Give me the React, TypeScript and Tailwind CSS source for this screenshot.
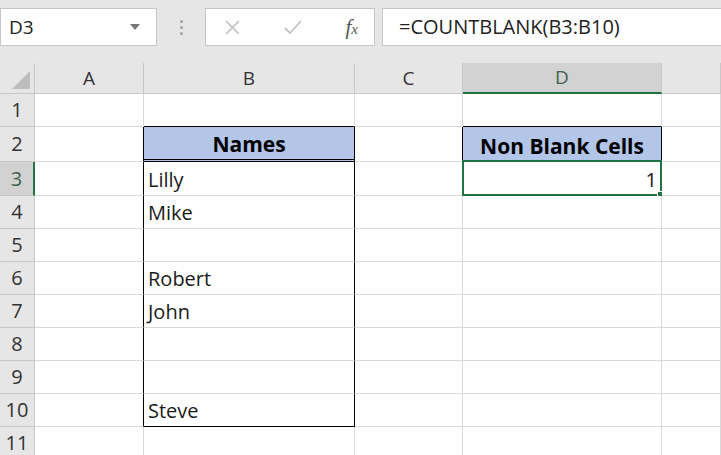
import React from 'react';

const cols = ['A', 'B', 'C', 'D', 'E'];
const rowHeights = [33, 35, 34, 33, 33, 33, 33, 33, 33, 33, 33];
const names: Record<number, string> = { 3: 'Lilly', 4: 'Mike', 6: 'Robert', 7: 'John', 10: 'Steve' };

const cellFont = { fontFamily: '"Open Sans", "Liberation Sans", sans-serif' };

function Cell({ row, col }: { row: number; col: number }) {
  // default grid borders
  let right = 'border-r-[#d9d9d9]';
  let bottom = 'border-b-[#d9d9d9]';
  let bottomW = 'border-b';
  let bg = 'bg-white';
  let content: React.ReactNode = null;

  if (col === 0 && row >= 2 && row <= 10) right = 'border-r-black';
  if (col === 1) {
    if (row === 1) bottom = 'border-b-black';
    if (row >= 2 && row <= 10) right = 'border-r-black';
    if (row === 2) {
      bottom = 'border-b-black';
      bottomW = 'border-b-[3px] border-double';
      bg = 'bg-[#b4c6e7]';
      content = <span className="w-full text-center font-bold text-[21px] leading-[28px] text-black">Names</span>;
    }
    if (row === 10) bottom = 'border-b-black';
    if (names[row]) content = <span className="pl-[4px] text-[20px] leading-[28px] text-[#1a1a1a]">{names[row]}</span>;
  }
  if (col === 2 && row === 2) right = 'border-r-black';
  if (col === 3) {
    if (row === 1) bottom = 'border-b-black';
    if (row === 2) {
      right = 'border-r-black';
      bg = 'bg-[#b4c6e7]';
      content = <span className="w-full text-center font-bold text-[21px] leading-[28px] text-black whitespace-nowrap">Non Blank Cells</span>;
    }
  }

  const selected = col === 3 && row === 3;

  return (
    <div className={`relative flex items-end pb-[1px] border-r ${bottomW} ${right} ${bottom} ${bg}`} style={cellFont}>
      {content}
      {selected && (
        <div className="absolute -left-px -top-[2px] -right-px -bottom-px border-2 border-[#217346] flex items-end justify-end pr-[3px]">
          <span className="text-[20px] leading-[28px] text-[#1a1a1a]">1</span>
          <div className="absolute -right-[4px] -bottom-[4px] w-[7px] h-[7px] bg-[#217346] border border-white" />
        </div>
      )}
    </div>
  );
}

export default function App() {
  return (
    <div className="w-[721px] h-[455px] overflow-hidden bg-white" style={{ fontFamily: '"Open Sans", "Liberation Sans", sans-serif' }}>
      {/* formula bar */}
      <div className="h-[64px] bg-[#e6e6e6] flex items-start pt-[8px]">
        <div className="w-[157px] h-[38px] bg-white border border-[#c6c6c6] flex items-center justify-between pl-[8px] pr-[16px]">
          <span className="text-[19px] text-[#222]">D3</span>
          <svg width="10" height="6" viewBox="0 0 10 6"><path d="M0 0h10L5 6z" fill="#777" /></svg>
        </div>
        <div className="w-[48px] h-[38px] flex flex-col items-center justify-center gap-[3px]">
          <span className="w-[3px] h-[3px] bg-[#a0a0a0] rounded-full" />
          <span className="w-[3px] h-[3px] bg-[#a0a0a0] rounded-full" />
          <span className="w-[3px] h-[3px] bg-[#a0a0a0] rounded-full" />
        </div>
        <div className="w-[170px] h-[38px] bg-white border border-[#c6c6c6] flex items-center pl-[18px] pr-[16px] justify-between">
          <svg width="17" height="17" viewBox="0 0 16 16"><path d="M2 2l12 12M14 2L2 14" stroke="#c3c3c3" strokeWidth="1.5" /></svg>
          <svg width="20" height="16" viewBox="0 0 20 16"><path d="M2 9l5 5L18 2" stroke="#c3c3c3" strokeWidth="1.8" fill="none" /></svg>
          <span className="italic text-[21px] leading-none text-[#555]" style={{ fontFamily: '"Liberation Serif", serif' }}>
            f<span className="text-[15px]">x</span>
          </span>
        </div>
        <div className="ml-[7px] flex-1 h-[38px] bg-white border border-[#c6c6c6] border-r-0 flex items-center pl-[16px]">
          <span className="text-[20px] text-[#222]">=COUNTBLANK(B3:B10)</span>
        </div>
      </div>

      {/* sheet */}
      <div className="grid grid-cols-[35px_109px_211px_108px_199px_1fr] grid-rows-[31px_33px_35px_34px_33px_33px_33px_33px_33px_33px_33px_33px] -mt-px">
        <div className="bg-[#e6e6e6] border-r border-b border-[#c8c8c8] flex items-end justify-end p-[4px]">
          <svg width="18" height="18" viewBox="0 0 18 18"><path d="M18 0v18H0z" fill="#bdbdbd" /></svg>
        </div>
        {cols.map((c) => (
          <div
            key={c}
            className={
              c === 'D'
                ? 'bg-[#d2d2d2] border-r border-r-[#c8c8c8] border-b-2 border-b-[#217346] flex items-center justify-center text-[19px] text-[#3f5f4f]'
                : 'bg-[#e6e6e6] border-r border-b border-[#c8c8c8] flex items-center justify-center text-[19px] text-[#333]'
            }
          >
            {c === 'E' ? '' : c}
          </div>
        ))}
        {rowHeights.map((_, i) => {
          const row = i + 1;
          return (
            <React.Fragment key={row}>
              <div
                className={
                  row === 3
                    ? 'bg-[#d2d2d2] border-b border-b-[#c8c8c8] border-r-2 border-r-[#217346] flex items-center justify-center text-[20px] text-[#3f5f4f]'
                    : 'bg-[#e6e6e6] border-r border-b border-[#c8c8c8] flex items-center justify-center text-[20px] text-[#333]'
                }
              >
                {row}
              </div>
              {cols.map((_, ci) => (
                <Cell key={ci} row={row} col={ci} />
              ))}
            </React.Fragment>
          );
        })}
      </div>
    </div>
  );
}
